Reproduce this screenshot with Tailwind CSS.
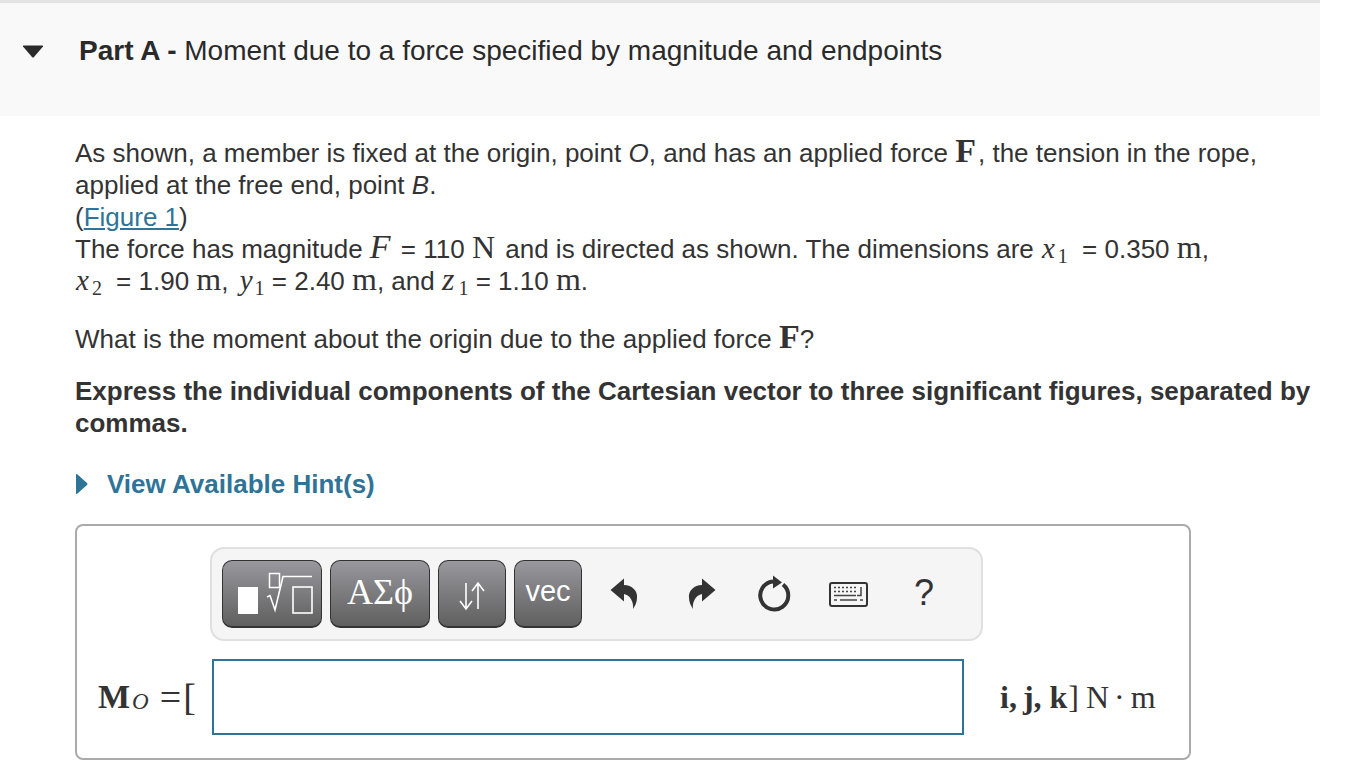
<!DOCTYPE html>
<html lang="en">
<head>
  <meta charset="UTF-8" />
  <title>Part A</title>
  <script src="https://cdn.jsdelivr.net/npm/@tailwindcss/browser@4"></script>
</head>
<body class="bg-white text-[#333] font-['Liberation_Sans',Arial,sans-serif] text-[26px] leading-[32px] overflow-hidden">
  <div class="w-[1320px]">

    <!-- Part header -->
    <div class="h-[116px] bg-[#f9f9f9] border-t-[3px] border-[#e3e3e3] flex items-start pt-[32px]">
      <svg class="ml-[22px] mt-[10px] w-[22px] h-[13px]" viewBox="0 0 22 13"><path d="M1 1.5 Q0.5 0.5 2 0.5 H20 Q21.5 0.5 21 1.5 L12 12 Q11 13 10 12 Z" fill="#2a2a2a"/></svg>
      <h2 class="ml-[35px] text-[28px] text-[#2a2a2a]"><b>Part A -</b> Moment due to a force specified by magnitude and endpoints</h2>
    </div>

    <div class="pl-[75px] pt-[21px]">
      <p class="whitespace-nowrap">
        As shown, a member is fixed at the origin, point <i>O</i>, and has an applied force <b class="font-['Liberation_Serif',serif] text-[34px] leading-[0] mr-[2px]">F</b>, the tension in the rope,<br>
        applied at the free end, point <i>B</i>.<br>
        (<a class="text-[#2f7497] underline" href="#">Figure 1</a>)<br>
        The force has magnitude <i class="font-['Liberation_Serif',serif] text-[34px] leading-[0] mr-[3px]">F</i> = 110 <span class="font-['Liberation_Serif',serif] text-[32px] leading-[0] mr-[3px]">N</span> and is directed as shown. The dimensions are <i class="font-['Liberation_Serif',serif] text-[29px] leading-[0] ml-[1px]">x</i><sub class="font-['Liberation_Serif',serif] text-[20px] ml-[3px] mr-[7px]">1</sub> = 0.350 <span class="font-['Liberation_Serif',serif] text-[32px] leading-[0]">m</span>,<br>
        <i class="font-['Liberation_Serif',serif] text-[29px] leading-[0] ml-[1px]">x</i><sub class="font-['Liberation_Serif',serif] text-[20px] ml-[3px] mr-[7px]">2</sub> = 1.90 <span class="font-['Liberation_Serif',serif] text-[32px] leading-[0]">m</span>, <i class="font-['Liberation_Serif',serif] text-[29px] leading-[0] ml-[4px]">y</i><sub class="font-['Liberation_Serif',serif] text-[20px] ml-[2px]">1</sub> = 2.40 <span class="font-['Liberation_Serif',serif] text-[32px] leading-[0]">m</span>, and <i class="font-['Liberation_Serif',serif] text-[32px] leading-[0]">z</i><sub class="font-['Liberation_Serif',serif] text-[20px] ml-[4px]">1</sub> = 1.10 <span class="font-['Liberation_Serif',serif] text-[32px] leading-[0]">m</span>.
      </p>
      <p class="mt-[26px] whitespace-nowrap">What is the moment about the origin due to the applied force <b class="font-['Liberation_Serif',serif] text-[34px] leading-[0]">F</b>?</p>
      <p class="mt-[20px] font-bold whitespace-nowrap">Express the individual components of the Cartesian vector to three significant figures, separated by<br>commas.</p>

      <!-- Hint toggle -->
      <div class="mt-[29px] flex items-center">
        <svg class="w-[13px] h-[22px]" viewBox="0 0 13 22"><path d="M1 2 Q1 0.5 2.5 1.5 L12 10 Q13 11 12 12 L2.5 20.5 Q1 21.5 1 20 Z" fill="#2f7497"/></svg>
        <a class="ml-[19px] font-bold text-[#2f7497]" href="#">View Available Hint(s)</a>
      </div>

      <!-- Answer box -->
      <div class="mt-[24px] w-[1116px] h-[236px] border-2 border-[#aaa] rounded-[8px] relative">
        <div class="ml-[133px] mt-[21px] w-[773px] h-[94px] bg-[#f5f5f5] border-2 border-[#e0e0e0] rounded-[14px] flex items-center pl-[10px]">
          <button class="w-[100px] h-[68px] rounded-[10px] border border-[#333] border-b-2 bg-linear-to-b from-[#98989e] to-[#606060] flex items-center justify-center">
            <svg class="ml-[6px]" width="76" height="54" viewBox="0 0 76 54" fill="none" stroke="#fff"><rect x="1" y="20" width="20" height="27" fill="#fff" stroke="none"/><rect x="32.5" y="6.5" width="10" height="14" stroke-width="1.5"/><path d="M30 30 L33 28.5 L38 43 L46 9.5 H75" stroke-width="1.6"/><rect x="56" y="20" width="19" height="26" stroke-width="1.6"/></svg>
          </button>
          <button class="ml-[8px] w-[100px] h-[68px] rounded-[10px] border border-[#333] border-b-2 bg-linear-to-b from-[#98989e] to-[#606060] text-white font-['Liberation_Serif',serif] text-[36px] pb-[4px]">ΑΣϕ</button>
          <button class="ml-[8px] w-[68px] h-[68px] rounded-[10px] border border-[#333] border-b-2 bg-linear-to-b from-[#98989e] to-[#606060] flex items-center justify-center">
            <svg class="mt-[4px]" width="28" height="30" viewBox="0 0 28 30" fill="none" stroke="#fff" stroke-width="1.6"><path d="M8 2 V27 M2 20 L8 28 L14 20"/><path d="M20 28 V3 M14 10 L20 2 L26 10"/></svg>
          </button>
          <button class="ml-[8px] w-[68px] h-[68px] rounded-[10px] border border-[#333] border-b-2 bg-linear-to-b from-[#98989e] to-[#606060] text-white text-[29px] pb-[5px]">vec</button>

          <!-- undo / redo / reset / keyboard / help -->
          <svg class="ml-[28px]" width="28" height="32" viewBox="0 0 28 32"><path d="M0.5 12 L14 0.5 V7 C22 7 28 13 27 20 C27 24 25 28 23 31 C24 24 20 17 14 16 V23.5 Z" fill="#333"/></svg>
          <svg class="ml-[50px]" width="28" height="32" viewBox="0 0 28 32"><path d="M27.5 12 L14 0.5 V7 C6 7 0 13 1 20 C1 24 3 28 5 31 C4 24 8 17 14 16 V23.5 Z" fill="#333"/></svg>
          <svg class="ml-[42px]" width="34" height="38" viewBox="0 0 34 38" fill="none"><path d="M15 6.5 A14 14 0 1 0 25 9.5" stroke="#333" stroke-width="4"/><path d="M15 0.5 L24 7.5 L15 13.5 Z" fill="#333"/></svg>
          <svg class="ml-[37px]" width="40" height="25" viewBox="0 0 40 25" fill="none"><rect x="1" y="1" width="37" height="23" rx="2" stroke="#333" stroke-width="2"/><g stroke="#444" stroke-width="1.5"><path d="M5 5.5 H29" stroke-dasharray="2 2"/><path d="M5 9.5 H29" stroke-dasharray="2 2"/><path d="M5 13.5 H27"/><path d="M32 5 V13.5 H28"/><path d="M5 18 H8 M11 18 H28 M31 18 H34"/></g></svg>
          <span class="ml-[45px] text-[#333] text-[36px] pb-[2px]">?</span>
        </div>

        <!-- Equation row -->
        <div class="mt-[18px] flex items-center h-[76px] font-['Liberation_Serif',serif] text-[32px]">
          <span class="ml-[21px] w-[114px] whitespace-nowrap flex items-center">
            <b class="text-[34px]">M</b><i class="text-[23px] mt-[10px] ml-[2px]">O</i><span class="text-[38px] ml-[11px] leading-none">=</span><span class="text-[38px] font-light leading-none ml-[2px]">[</span>
          </span>
          <input class="w-[752px] h-[76px] bg-white border-2 border-[#2f7497] outline-none" type="text" />
          <span class="ml-[36px] whitespace-nowrap flex items-center"><b>i,</b><b class="ml-[6px]">j,</b><b class="ml-[8px]">k</b><span class="ml-[1px]">]</span><span class="ml-[7px]">N</span><span class="ml-[5px]">·</span><span class="ml-[6px]">m</span></span>
        </div>
      </div>
    </div>
  </div>
</body>
</html>
